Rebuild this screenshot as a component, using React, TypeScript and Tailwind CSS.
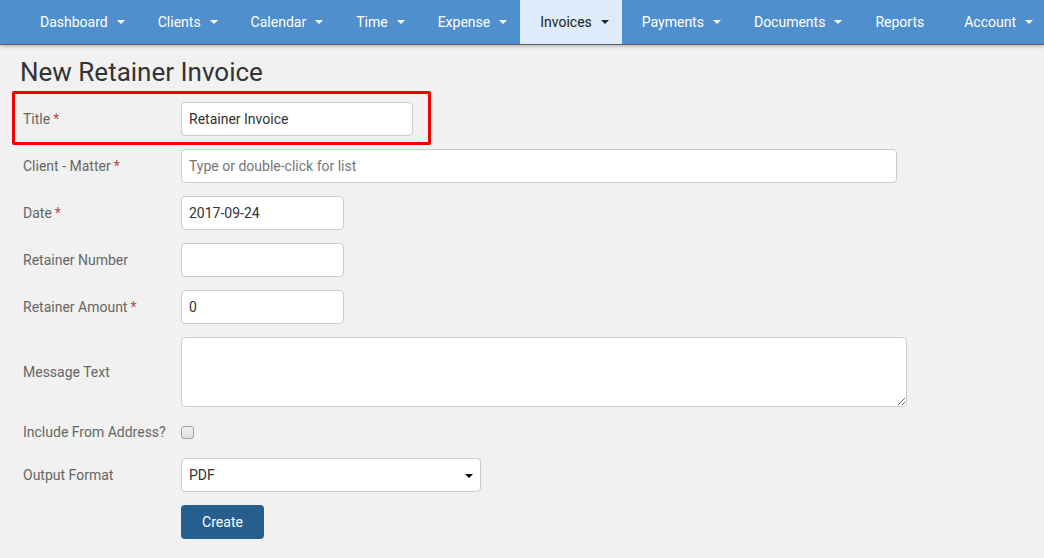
const navItems = [
  { label: "Dashboard", caret: true },
  { label: "Clients", caret: true },
  { label: "Calendar", caret: true },
  { label: "Time", caret: true },
  { label: "Expense", caret: true },
  { label: "Invoices", caret: true, active: true },
  { label: "Payments", caret: true },
  { label: "Documents", caret: true },
  { label: "Reports", caret: false },
  { label: "Account", caret: true },
];

function Caret({ dark }: { dark?: boolean }) {
  return (
    <span
      className={`ml-[9px] inline-block h-0 w-0 border-x-4 border-t-4 border-x-transparent ${
        dark ? "border-t-[#222]" : "border-t-white"
      }`}
    />
  );
}

function Label({ text, required }: { text: string; required?: boolean }) {
  return (
    <div className="w-[158px] shrink-0 text-[14px] text-[#666]">
      {text}
      {required && <span className="ml-[3px] text-[#b94a48]">*</span>}
    </div>
  );
}

const inputCls =
  "h-[34px] rounded-[4px] border border-[#ccc] bg-white px-[7px] text-[14px] text-[#333] outline-none placeholder:text-[#777]";

export default function App() {
  return (
    <div className="min-h-[558px] bg-[#f1f1f1] font-['Roboto',sans-serif]">
      <nav className="flex h-[45px] items-stretch border-b border-[#5c5c5c] bg-[#4f8fce] pl-[20px] shadow-[0_2px_3px_rgba(0,0,0,0.2)]">
        {navItems.map((item) => (
          <div
            key={item.label}
            className={`flex items-center pl-5 text-[14px] ${item.caret ? "pr-[13px]" : "pr-5"} ${
              item.active ? "bg-[#ddebfa] text-[#222]" : "text-white"
            }`}
          >
            {item.label}
            {item.caret && <Caret dark={item.active} />}
          </div>
        ))}
      </nav>

      <div className="pl-[23px]">
        <h1 className="ml-[-3px] mt-[14px] text-[26px] leading-[26px] text-[#333]">
          New Retainer Invoice
        </h1>

        <div className="mt-[17px]">
          <div className="relative mb-[13px] flex h-[34px] items-center">
            <Label text="Title" required />
            <input className={`${inputCls} w-[232px]`} defaultValue="Retainer Invoice" />
            <div className="pointer-events-none absolute left-[-11px] top-[-11px] h-[54px] w-[419px] rounded-[2px] border-[3px] border-[#f20000]" />
          </div>

          <div className="mb-[13px] flex h-[34px] items-center">
            <Label text="Client - Matter" required />
            <input className={`${inputCls} w-[716px]`} placeholder="Type or double-click for list" />
          </div>

          <div className="mb-[13px] flex h-[34px] items-center">
            <Label text="Date" required />
            <input className={`${inputCls} w-[163px]`} defaultValue="2017-09-24" />
          </div>

          <div className="mb-[13px] flex h-[34px] items-center">
            <Label text="Retainer Number" />
            <input className={`${inputCls} w-[163px]`} />
          </div>

          <div className="mb-[13px] flex h-[34px] items-center">
            <Label text="Retainer Amount" required />
            <input className={`${inputCls} w-[163px]`} defaultValue="0" />
          </div>

          <div className="mb-[13px] flex h-[70px] items-center">
            <Label text="Message Text" />
            <textarea className="h-[70px] w-[726px] rounded-[4px] border border-[#ccc] bg-white px-[7px] py-[6px] text-[14px] text-[#333] outline-none" />
          </div>

          <div className="mb-[13px] flex h-[25px] items-center">
            <Label text="Include From Address?" />
            <span className="h-[13px] w-[13px] rounded-[3px] border border-[#a3a3a3] bg-gradient-to-b from-[#f2f2f2] to-[#dcdcdc]" />
          </div>

          <div className="mb-[13px] flex h-[34px] items-center">
            <Label text="Output Format" />
            <div className="relative flex h-[34px] w-[300px] items-center rounded-[4px] border border-[#ccc] bg-white px-[7px] text-[14px] text-[#333]">
              PDF
              <span className="absolute right-[7px] top-[15px] h-0 w-0 border-x-4 border-t-4 border-x-transparent border-t-black" />
            </div>
          </div>

          <div className="flex">
            <div className="w-[158px] shrink-0" />
            <button className="h-[34px] w-[83px] rounded-[4px] bg-[#265f8e] text-[14px] text-white">
              Create
            </button>
          </div>
        </div>
      </div>
    </div>
  );
}
